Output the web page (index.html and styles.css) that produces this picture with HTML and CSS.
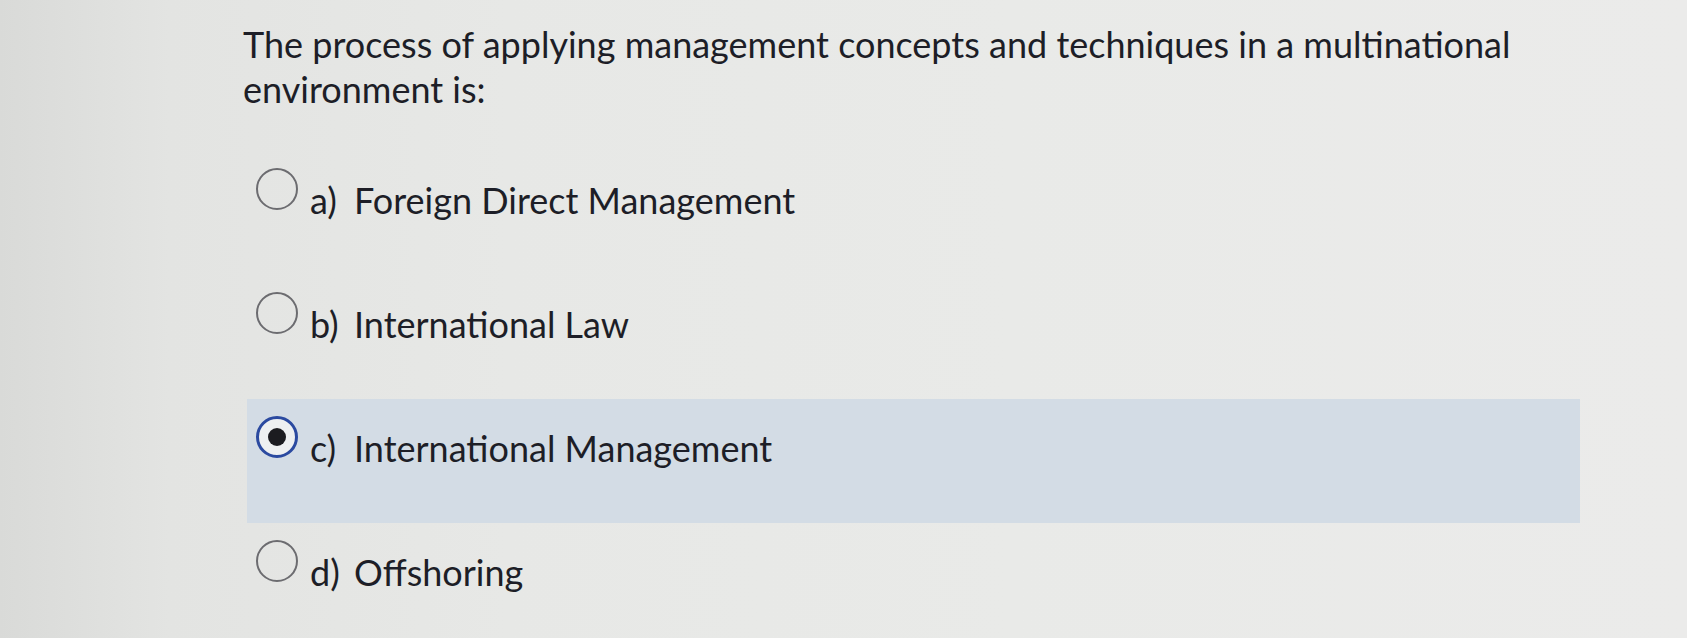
FILE: index.html
```html
<!DOCTYPE html>
<html lang="en">
<head>
<meta charset="utf-8">
<title>Question</title>
<link rel="stylesheet" href="styles.css">
</head>
<body>
<main class="page">
  <p class="question">The process of applying management concepts and techniques in a multinational environment is:</p>
  <div class="options">
    <label class="option">
      <span class="radio"></span>
      <span class="letter">a)</span>
      <span class="text">Foreign Direct Management</span>
    </label>
    <label class="option">
      <span class="radio"></span>
      <span class="letter">b)</span>
      <span class="text">International Law</span>
    </label>
    <label class="option selected">
      <span class="radio checked"></span>
      <span class="letter">c)</span>
      <span class="text">International Management</span>
    </label>
    <label class="option">
      <span class="radio"></span>
      <span class="letter">d)</span>
      <span class="text">Offshoring</span>
    </label>
  </div>
</main>
</body>
</html>
```

FILE: styles.css
```css
html, body {
  margin: 0;
  padding: 0;
}
body {
  width: 1687px;
  height: 638px;
  overflow: hidden;
  background: linear-gradient(90deg, #d9dad8 0%, #e3e4e2 10%, #e7e8e6 30%, #e9eae8 60%, #ebebea 100%);
  font-family: Lato, "Open Sans", sans-serif;
  color: #1d1e27;
}
.page {
  padding-left: 243px;
}
.question {
  margin: 22px 0 0 0;
  font-size: 36px;
  line-height: 45px;
  width: 1330px;
}
.options {
  margin-top: 39px;
  margin-left: 4px;
  width: 1333px;
  display: flex;
  flex-direction: column;
}
.option {
  display: flex;
  align-items: flex-start;
  height: 124px;
  box-sizing: border-box;
  padding: 17px 0 0 9px;
  font-size: 36px;
  line-height: 42px;
}
.option.selected {
  background: #d3dce5;
}
.radio {
  width: 42px;
  height: 42px;
  box-sizing: border-box;
  border: 2px solid #6c6c70;
  border-radius: 50%;
  flex: none;
  display: flex;
  align-items: center;
  justify-content: center;
}
.radio.checked {
  border: 3px solid #2b4aa0;
  background: #eef0f1;
}
.radio.checked::after {
  content: "";
  width: 18px;
  height: 18px;
  border-radius: 50%;
  background: #1c1c20;
}
.letter {
  margin: 11px 0 0 12px;
  width: 44px;
  flex: none;
}
.text {
  margin-top: 11px;
}
```
